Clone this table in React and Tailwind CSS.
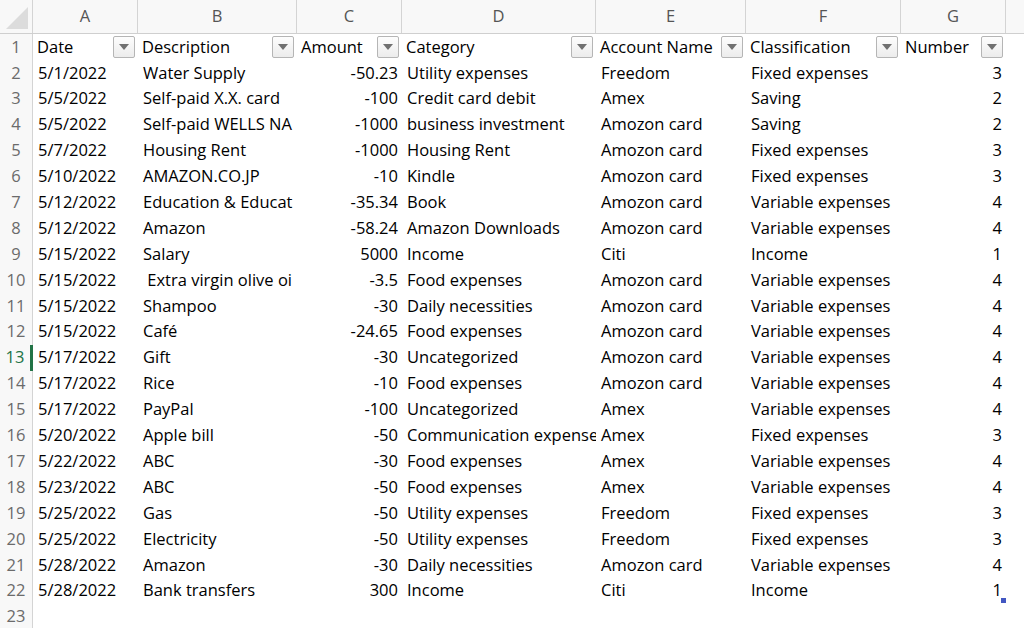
const cols = ['A', 'B', 'C', 'D', 'E', 'F', 'G']

const headers = ['Date', 'Description', 'Amount', 'Category', 'Account Name', 'Classification', 'Number']

const rows = [
  ['5/1/2022', 'Water Supply', '-50.23', 'Utility expenses', 'Freedom', 'Fixed expenses', '3'],
  ['5/5/2022', 'Self-paid X.X. card', '-100', 'Credit card debit', 'Amex', 'Saving', '2'],
  ['5/5/2022', 'Self-paid WELLS NA', '-1000', 'business investment', 'Amozon card', 'Saving', '2'],
  ['5/7/2022', 'Housing Rent', '-1000', 'Housing Rent', 'Amozon card', 'Fixed expenses', '3'],
  ['5/10/2022', 'AMAZON.CO.JP', '-10', 'Kindle', 'Amozon card', 'Fixed expenses', '3'],
  ['5/12/2022', 'Education & Educat', '-35.34', 'Book', 'Amozon card', 'Variable expenses', '4'],
  ['5/12/2022', 'Amazon', '-58.24', 'Amazon Downloads', 'Amozon card', 'Variable expenses', '4'],
  ['5/15/2022', 'Salary', '5000', 'Income', 'Citi', 'Income', '1'],
  ['5/15/2022', '\u00a0Extra virgin olive oi', '-3.5', 'Food expenses', 'Amozon card', 'Variable expenses', '4'],
  ['5/15/2022', 'Shampoo', '-30', 'Daily necessities', 'Amozon card', 'Variable expenses', '4'],
  ['5/15/2022', 'Café', '-24.65', 'Food expenses', 'Amozon card', 'Variable expenses', '4'],
  ['5/17/2022', 'Gift', '-30', 'Uncategorized', 'Amozon card', 'Variable expenses', '4'],
  ['5/17/2022', 'Rice', '-10', 'Food expenses', 'Amozon card', 'Variable expenses', '4'],
  ['5/17/2022', 'PayPal', '-100', 'Uncategorized', 'Amex', 'Variable expenses', '4'],
  ['5/20/2022', 'Apple bill', '-50', 'Communication expense', 'Amex', 'Fixed expenses', '3'],
  ['5/22/2022', 'ABC', '-30', 'Food expenses', 'Amex', 'Variable expenses', '4'],
  ['5/23/2022', 'ABC', '-50', 'Food expenses', 'Amex', 'Variable expenses', '4'],
  ['5/25/2022', 'Gas', '-50', 'Utility expenses', 'Freedom', 'Fixed expenses', '3'],
  ['5/25/2022', 'Electricity', '-50', 'Utility expenses', 'Freedom', 'Fixed expenses', '3'],
  ['5/28/2022', 'Amazon', '-30', 'Daily necessities', 'Amozon card', 'Variable expenses', '4'],
  ['5/28/2022', 'Bank transfers', '300', 'Income', 'Citi', 'Income', '1'],
]

// numbers sit at the right edge of their cell
const rightAligned = [false, false, true, false, false, false, true]

const grid = 'grid grid-cols-[33px_105px_159px_105px_194px_150px_155px_105px_1fr]'

function FilterButton() {
  return (
    <span className="shrink-0 w-[22px] h-[22px] grid place-items-center rounded-[2px] border border-[#b5b5b5] bg-gradient-to-b from-[#fdfdfd] to-[#ececec]">
      <svg width="10" height="6" viewBox="0 0 10 6">
        <path d="M0 0h10L5 6z" fill="#707070" />
      </svg>
    </span>
  )
}

function RowNumber({ n, active }) {
  return (
    <div
      className={
        'h-[25.9px] flex items-center justify-center bg-[#f8f8f8] ' +
        (active ? 'text-[#217346] border-r-[3px] border-[#217346]' : 'text-[#6b6b6b] border-r border-[#d4d4d4]')
      }
    >
      {n}
    </div>
  )
}

export default function App() {
  return (
    <div className="w-[1024px] h-[628px] overflow-hidden bg-white text-[16.5px] text-black font-['Open_Sans','Liberation_Sans',sans-serif] leading-none">
      {/* column letters */}
      <div className={grid + ' h-[34px] bg-[#f8f8f8] border-b border-[#cfcfcf] text-[#555]'}>
        <div className="relative border-r border-[#d4d4d4] overflow-hidden">
          <svg className="absolute right-[4px] bottom-[4px]" width="22" height="22" viewBox="0 0 22 22">
            <path d="M22 0V22H0z" fill="#dcdcdc" />
          </svg>
        </div>
        {cols.map((c) => (
          <div key={c} className="flex items-center justify-center border-r border-[#d4d4d4]">
            {c}
          </div>
        ))}
        <div />
      </div>

      {/* header row with filters */}
      <div className={grid}>
        <RowNumber n={1} />
        {headers.map((h) => (
          <div key={h} className="h-[25.9px] flex items-center justify-between pl-[4px] pr-[3px] overflow-hidden whitespace-nowrap">
            <span>{h}</span>
            <FilterButton />
          </div>
        ))}
        <div />
      </div>

      {rows.map((r, i) => (
        <div key={i} className={grid}>
          <RowNumber n={i + 2} active={i + 2 === 13} />
          {r.map((v, j) => (
            <div
              key={j}
              className={
                'relative h-[25.9px] flex items-center overflow-hidden whitespace-nowrap ' +
                (rightAligned[j] ? 'justify-end pr-[4px]' : 'pl-[5px]')
              }
            >
              {v}
              {i === rows.length - 1 && j === 6 && (
                <span className="absolute right-0 bottom-[1px] w-[5px] h-[5px] bg-[#4257c2]" />
              )}
            </div>
          ))}
          <div />
        </div>
      ))}

      <div className={grid}>
        <RowNumber n={23} />
      </div>
    </div>
  )
}
